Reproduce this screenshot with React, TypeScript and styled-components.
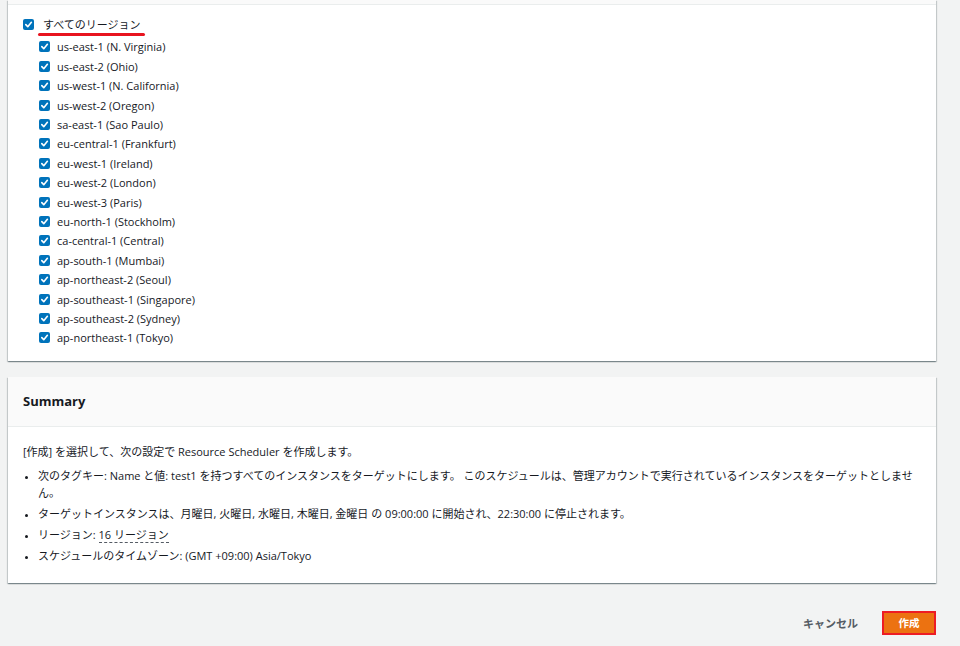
import React from "react";
import styled, { createGlobalStyle } from "styled-components";

const Global = createGlobalStyle`
  html, body { margin: 0; padding: 0; background: #f2f3f3; }
  body { font-family: "Open Sans", "Noto Sans CJK JP", sans-serif; color: #16191f; -webkit-font-smoothing: antialiased; }
`;

const Page = styled.div`
  width: 960px;
  height: 646px;
  overflow: hidden;
  padding: 0 24px 0 8px;
  box-sizing: border-box;
  display: flex;
  flex-direction: column;
`;

const Card = styled.section`
  background: #fff;
  box-shadow: 0 1px 1px 0 rgba(0, 28, 36, 0.3), 1px 1px 1px 0 rgba(0, 28, 36, 0.15),
    -1px 1px 1px 0 rgba(0, 28, 36, 0.15);
`;

const TopBand = styled.div`
  height: 4px;
  background: #fafafa;
  border-bottom: 1px solid #eaeded;
`;

const RegionBody = styled.div`
  padding: 9px 15px 13px 15px;
`;

const Row = styled.label<{ $child?: boolean }>`
  display: flex;
  align-items: center;
  gap: 7px;
  height: ${(p) => (p.$child ? "19.4px" : "20px")};
  padding-left: ${(p) => (p.$child ? "16px" : "0")};
  font-size: 11px;
  line-height: 1;
  color: #16191f;
  margin-bottom: ${(p) => (p.$child ? "0" : "3.3px")};
`;

const Box = styled.span`
  width: 11px;
  height: 11px;
  border-radius: 2px;
  background: #0073bb;
  display: inline-flex;
  align-items: center;
  justify-content: center;
  flex: none;
`;

const ParentLabel = styled.span`
  position: relative;
  padding-left: 2px;
  font-size: 11px;
  &::after {
    content: "";
    position: absolute;
    left: -3px;
    right: -4px;
    bottom: -6px;
    height: 2.5px;
    border-radius: 2px;
    background: #e8141f;
  }
`;

const Check = () => (
  <Box>
    <svg width="9" height="9" viewBox="0 0 10 10">
      <path d="M2 5.2 L4.2 7.4 L8.2 2.6" fill="none" stroke="#fff" strokeWidth="1.8" strokeLinecap="round" strokeLinejoin="round" />
    </svg>
  </Box>
);

const SummaryCard = styled(Card)`
  margin-top: 16px;
`;

const SummaryHeader = styled.header`
  height: 50px;
  box-sizing: border-box;
  background: #fafafa;
  border-bottom: 1px solid #eaeded;
  display: flex;
  align-items: center;
  padding: 0 15px;
  font-size: 13px;
  font-weight: 700;
`;

const SummaryBody = styled.div`
  padding: 16px 15px 15px 15px;
  font-size: 11px;
  line-height: 17px;
`;

const Intro = styled.p`
  margin: 0 0 7px 0;
`;

const List = styled.ul`
  margin: 0;
  padding-left: 15px;
  list-style: disc;
  li {
    margin-bottom: 4px;
  }
  li::marker {
    font-size: 9px;
  }
`;

const Dotted = styled.span`
  border-bottom: 1px dashed #545b64;
`;

const Footer = styled.div`
  display: flex;
  justify-content: flex-end;
  align-items: center;
  gap: 24px;
  margin-top: 28px;
`;

const CancelBtn = styled.button`
  background: none;
  border: none;
  font-family: inherit;
  font-size: 11px;
  font-weight: 700;
  color: #545b64;
  padding: 0;
  cursor: pointer;
`;

const CreateBtn = styled.button`
  width: 54px;
  height: 24px;
  box-sizing: border-box;
  background: #ec7211;
  border: 2px solid #ed1c24;
  color: #fff;
  font-family: inherit;
  font-size: 10.5px;
  font-weight: 700;
  padding: 0;
  cursor: pointer;
`;

const regions = [
  "us-east-1 (N. Virginia)",
  "us-east-2 (Ohio)",
  "us-west-1 (N. California)",
  "us-west-2 (Oregon)",
  "sa-east-1 (Sao Paulo)",
  "eu-central-1 (Frankfurt)",
  "eu-west-1 (Ireland)",
  "eu-west-2 (London)",
  "eu-west-3 (Paris)",
  "eu-north-1 (Stockholm)",
  "ca-central-1 (Central)",
  "ap-south-1 (Mumbai)",
  "ap-northeast-2 (Seoul)",
  "ap-southeast-1 (Singapore)",
  "ap-southeast-2 (Sydney)",
  "ap-northeast-1 (Tokyo)",
];

export default function App() {
  return (
    <>
      <Global />
      <Page>
        <Card>
          <TopBand />
          <RegionBody>
            <Row>
              <Check />
              <ParentLabel>すべてのリージョン</ParentLabel>
            </Row>
            {regions.map((r) => (
              <Row $child key={r}>
                <Check />
                <span>{r}</span>
              </Row>
            ))}
          </RegionBody>
        </Card>
        <SummaryCard>
          <SummaryHeader>Summary</SummaryHeader>
          <SummaryBody>
            <Intro>[作成] を選択して、次の設定で Resource Scheduler を作成します。</Intro>
            <List>
              <li>
                次のタグキー: Name と値: test1 を持つすべてのインスタンスをターゲットにします。 このスケジュールは、管理アカウントで実行されているインスタンスをターゲットとしません。
              </li>
              <li>
                ターゲットインスタンスは、月曜日, 火曜日, 水曜日, 木曜日, 金曜日 の 09:00:00 に開始され、22:30:00 に停止されます。
              </li>
              <li>
                リージョン: <Dotted>16 リージョン</Dotted>
              </li>
              <li>スケジュールのタイムゾーン: (GMT +09:00) Asia/Tokyo</li>
            </List>
          </SummaryBody>
        </SummaryCard>
        <Footer>
          <CancelBtn>キャンセル</CancelBtn>
          <CreateBtn>作成</CreateBtn>
        </Footer>
      </Page>
    </>
  );
}
